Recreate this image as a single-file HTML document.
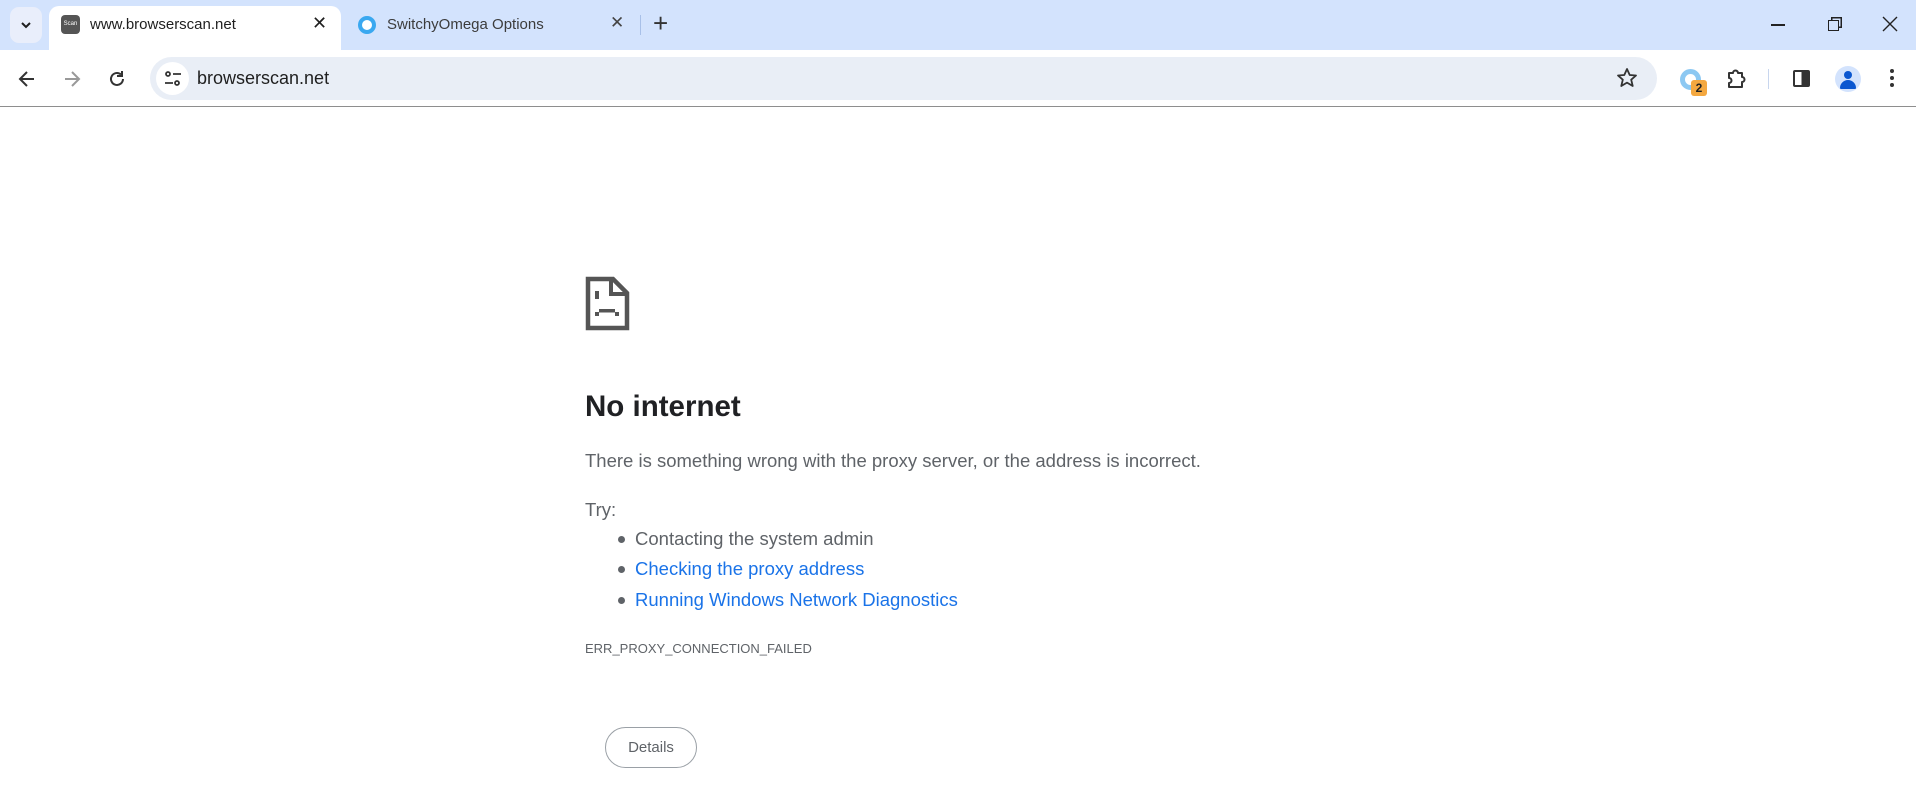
<!DOCTYPE html>
<html><head><meta charset="utf-8"><style>
*{margin:0;padding:0;box-sizing:border-box}
body{width:1916px;height:806px;background:#fff;font-family:"Liberation Sans",sans-serif;position:relative;overflow:hidden}
.abs{position:absolute}
#strip{left:0;top:0;width:1916px;height:50px;background:#d3e3fd}
#tb{left:0;top:50px;width:1916px;height:57px;background:#fff;border-bottom:1px solid #8e8e8e}
.tab{top:6px;height:44px;background:#fff;border-radius:10px 10px 0 0}
.t{font-size:15px;color:#1f1f1f}
.main{color:#5f6368}
</style></head><body>
<div id="strip" class="abs"></div>
<div class="abs" style="left:10px;top:7px;width:32px;height:36px;background:#e9eefb;border-radius:9px"></div>
<svg class="abs" style="left:19px;top:18px" width="14" height="14"><path d="M3 5l4 4 4-4" stroke="#1f1f1f" stroke-width="2" fill="none"/></svg>
<div class="abs tab" style="left:49px;width:292px"></div>
<div class="abs" style="left:61px;top:15px;width:19px;height:19px;background:#555;border-radius:4px;color:#fff;font-size:6px;line-height:19px;text-align:center">Scan</div>
<div class="abs t" style="left:90px;top:16px">www.browserscan.net</div>
<div class="abs" style="left:312px;top:13px;font-size:18px;color:#1f1f1f">✕</div>
<div class="abs" style="left:358px;top:16px;width:18px;height:18px;border-radius:50%;border:4px solid #3aa8f0;background:#fff"></div>
<div class="abs t" style="left:387px;top:16px;color:#3c3c3c">SwitchyOmega Options</div>
<div class="abs" style="left:610px;top:13px;font-size:17px;color:#444">✕</div>
<div class="abs" style="left:640px;top:15px;width:1px;height:20px;background:#a8c0e8"></div>
<div class="abs" style="left:653px;top:8px;font-size:26px;color:#333;font-weight:300">+</div>
<div class="abs" style="left:1771px;top:24px;width:14px;height:1.5px;background:#222"></div>
<div class="abs" style="left:1828px;top:20px;width:11px;height:11px;border:1.5px solid #222;background:#d3e3fd;box-shadow:3px -3px 0 -1.5px #d3e3fd,3px -3px 0 0 #222"></div>
<svg class="abs" style="left:1882px;top:16px" width="16" height="16"><path d="M1 1l14 14M15 1L1 15" stroke="#222" stroke-width="1.4"/></svg>

<div id="tb" class="abs"></div>
<svg class="abs" style="left:17px;top:69px" width="20" height="20"><path d="M17 10H4M10 3l-7 7 7 7" stroke="#333" stroke-width="2" fill="none"/></svg>
<svg class="abs" style="left:62px;top:69px" width="20" height="20"><path d="M3 10h13M10 3l7 7-7 7" stroke="#999" stroke-width="2" fill="none"/></svg>
<svg class="abs" style="left:107px;top:69px" width="20" height="20"><path d="M16 10a6 6 0 1 1-2-4.5" stroke="#333" stroke-width="2" fill="none"/><path d="M15 2v5h-5" stroke="#333" stroke-width="2" fill="none"/></svg>
<div class="abs" style="left:150px;top:57px;width:1507px;height:43px;background:#e9eef6;border-radius:22px"></div>
<div class="abs" style="left:156px;top:62px;width:33px;height:33px;background:#fff;border-radius:50%"></div>
<svg class="abs" style="left:164px;top:70px" width="18" height="18"><circle cx="4" cy="4" r="2" fill="none" stroke="#333" stroke-width="1.8"/><path d="M9 4h8M1 13h8" stroke="#333" stroke-width="1.8"/><circle cx="13" cy="13" r="2" fill="none" stroke="#333" stroke-width="1.8"/></svg>
<div class="abs" style="left:197px;top:68px;font-size:18px;color:#1f1f1f">browserscan.net</div>
<svg class="abs" style="left:1616px;top:67px" width="22" height="22"><path d="M11 2l2.7 6 6.3.5-4.8 4.2 1.5 6.3L11 15.6 5.3 19l1.5-6.3L2 8.5 8.3 8z" fill="none" stroke="#333" stroke-width="1.8" stroke-linejoin="round"/></svg>
<div class="abs" style="left:1680px;top:69px;width:21px;height:21px;border-radius:50%;border:5px solid #8cc8f2"></div>
<div class="abs" style="left:1691px;top:80px;width:16px;height:16px;border-radius:3px;background:#f4a840;font-size:12px;font-weight:bold;text-align:center;line-height:16px;color:#222">2</div>
<svg class="abs" style="left:1725px;top:68px" width="22" height="22"><path d="M4 5h4a2.5 2.5 0 0 1 5 0h4v4a2.5 2.5 0 0 1 0 5v5H4v-4a2.5 2.5 0 0 0 0-5z" fill="none" stroke="#333" stroke-width="2" stroke-linejoin="round"/></svg>
<div class="abs" style="left:1768px;top:69px;width:1px;height:20px;background:#c8d6ee"></div>
<div class="abs" style="left:1793px;top:70px;width:17px;height:17px;border:2px solid #333;border-radius:2px;background:linear-gradient(90deg,#fff 50%,#333 50%)"></div>
<div class="abs" style="left:1835px;top:66px;width:26px;height:26px;border-radius:50%;background:#d3e3fd;overflow:hidden"><div class="abs" style="left:9px;top:5px;width:8px;height:8px;border-radius:50%;background:#0b57d0"></div><div class="abs" style="left:5px;top:14px;width:16px;height:9px;border-radius:8px 8px 1px 1px;background:#0b57d0"></div></div>
<div class="abs" style="left:1890px;top:69px;width:4px;height:4px;border-radius:50%;background:#333;box-shadow:0 7px #333,0 14px #333"></div>

<svg class="abs" style="left:585px;top:276px" width="45" height="55"><path d="M3 3h25l14 14v35H3z" fill="none" stroke="#555" stroke-width="4.5"/><path d="M26 3v15h16" fill="none" stroke="#555" stroke-width="4"/><rect x="10" y="15" width="4" height="8" fill="#555"/><rect x="10" y="36" width="4" height="4" fill="#555"/><rect x="14" y="33" width="16" height="3.5" fill="#555"/><rect x="30" y="36" width="4" height="4" fill="#555"/></svg>
<div class="abs" style="left:585px;top:390px;font-size:29.5px;font-weight:bold;color:#202124">No internet</div>
<div class="abs main" style="left:585px;top:450px;font-size:18.5px">There is something wrong with the proxy server, or the address is incorrect.</div>
<div class="abs main" style="left:585px;top:499px;font-size:18.5px">Try:</div>
<div class="abs" style="left:618px;top:536px;width:7px;height:7px;border-radius:50%;background:#5f6368"></div>
<div class="abs" style="left:618px;top:566px;width:7px;height:7px;border-radius:50%;background:#5f6368"></div>
<div class="abs" style="left:618px;top:597px;width:7px;height:7px;border-radius:50%;background:#5f6368"></div>
<div class="abs main" style="left:635px;top:528px;font-size:18.5px">Contacting the system admin</div>
<div class="abs" style="left:635px;top:558px;font-size:18.5px;color:#1a73e8">Checking the proxy address</div>
<div class="abs" style="left:635px;top:589px;font-size:18.5px;color:#1a73e8">Running Windows Network Diagnostics</div>
<div class="abs main" style="left:585px;top:641px;font-size:13px">ERR_PROXY_CONNECTION_FAILED</div>
<div class="abs main" style="left:605px;top:727px;width:92px;height:41px;border:1px solid #9aa0a6;border-radius:21px;font-size:15px;text-align:center;line-height:39px">Details</div>
</body></html>
